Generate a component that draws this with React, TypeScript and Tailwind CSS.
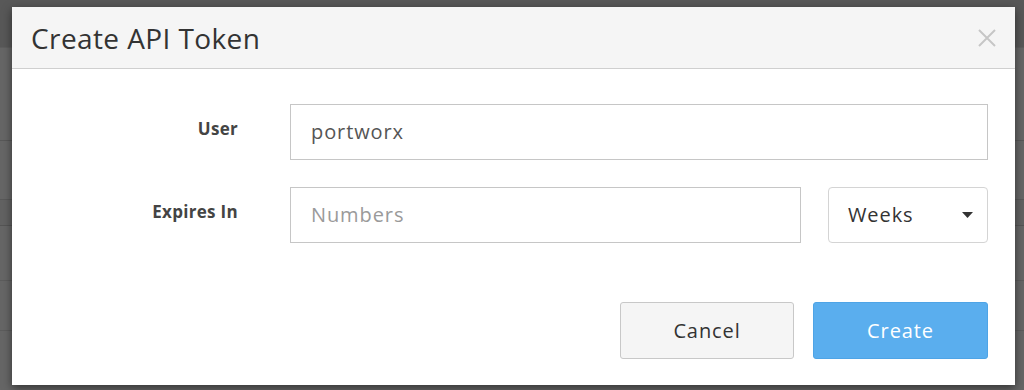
import React from "react";

export default function App() {
  const font = { fontFamily: "'Open Sans', 'Liberation Sans', sans-serif" };
  return (
    <div className="relative w-[1024px] h-[390px] overflow-hidden bg-[#666666]" style={font}>
      {/* background page behind overlay */}
      <div className="flex flex-col">
        <div className="h-[47px] bg-[#585858]" />
        <div className="h-[93px] border-t border-[#5e5e5e]" />
        <div className="h-[59px] border-t border-[#585858]" />
        <div className="h-[26px] border-t border-[#595959] bg-[#626262]" />
        <div className="h-[55px] border-t border-[#555555]" />
        <div className="h-[50px] border-t border-[#5c5c5c]" />
        <div className="h-[60px] border-t border-[#5c5c5c]" />
      </div>

      {/* modal */}
      <div className="absolute left-[12px] top-[7px] w-[1003px] h-[378px] bg-white shadow-[0_3px_9px_rgba(0,0,0,0.5)] flex flex-col">
        <div className="h-[62px] bg-[#f5f5f5] border-b border-[#cfcfcf] flex items-center justify-between pl-[19px] pr-[18px]">
          <h4 className="text-[28px] text-[#333] leading-none font-normal tracking-[0.4px]">Create API Token</h4>
          <svg width="20" height="20" viewBox="0 0 20 20" className="mt-[1px]">
            <path d="M2 2L18 18M18 2L2 18" stroke="#c6c6c6" strokeWidth="2" />
          </svg>
        </div>
        <div className="flex flex-col gap-[27px] pt-[35px] pl-[20px] pr-[27px]">
          <div className="flex items-center">
            <label className="w-[206px] text-right text-[17px] font-bold text-[#444] tracking-[0.3px] -mt-[7px]">User</label>
            <div className="ml-[52px] flex-1 h-[56px] border border-[#c6c6c6] flex items-center px-[20px] text-[20px] tracking-[0.9px] text-[#555]">
              portworx
            </div>
          </div>
          <div className="flex items-center">
            <label className="w-[206px] text-right text-[17px] font-bold text-[#444] tracking-[0.3px] -mt-[7px]">Expires In</label>
            <div className="ml-[52px] w-[511px] h-[56px] border border-[#c6c6c6] flex items-center px-[20px] text-[20px] tracking-[0.9px] text-[#9a9a9a]">
              Numbers
            </div>
            <div className="ml-[27px] flex-1 h-[56px] border border-[#d4d4d4] rounded-[4px] flex items-center justify-between pl-[19px] pr-[14px] text-[20px] tracking-[0.9px] text-[#333]">
              <span>Weeks</span>
              <svg width="11" height="6" viewBox="0 0 11 6"><path d="M0 0h11L5.5 6z" fill="#333" /></svg>
            </div>
          </div>
        </div>
        <div className="flex justify-end gap-[19px] pr-[27px] mt-[59px]">
          <button className="w-[174px] h-[57px] bg-[#f5f5f5] border border-[#c8c8c8] rounded-[3px] text-[20px] tracking-[0.9px] text-[#333]">Cancel</button>
          <button className="w-[175px] h-[57px] bg-[#5aaeee] border border-[#4ea4e6] rounded-[3px] text-[20px] tracking-[0.9px] text-white">Create</button>
        </div>
      </div>
    </div>
  );
}
